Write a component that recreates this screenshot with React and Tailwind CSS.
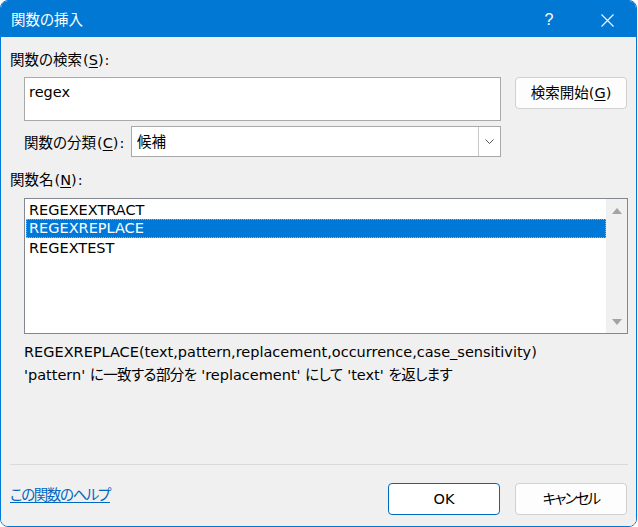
import React from "react";

const F = "font-['DejaVu_Sans','Noto_Sans_CJK_JP',sans-serif] [font-feature-settings:'palt']";

function U({ children }) {
  return <span className="underline underline-offset-2">{children}</span>;
}

export default function App() {
  return (
    <div className={`w-[638px] h-[527px] bg-white ${F} text-[14.5px] text-black`}>
      <div className="w-[637px] h-[527px] flex flex-col rounded-[8px] overflow-hidden border border-[#0078d4]">
        {/* Title bar */}
        <div className="h-[36px] bg-[#0078d4] flex items-center justify-between text-white shrink-0">
          <div className="pl-[10px] leading-[20px] pt-[2px]">関数の挿入</div>
          <div className="flex h-full items-center pr-[6px]">
            <div className="w-[46px] mr-[12px] h-full flex items-center justify-center text-[16px] font-['Liberation_Sans',sans-serif] pt-[2px]">?</div>
            <div className="w-[46px] h-full flex items-center justify-center pt-[2px]">
              <svg width="13" height="13" viewBox="0 0 13 13">
                <path d="M0.5 0.5 L12.5 12.5 M12.5 0.5 L0.5 12.5" stroke="white" strokeWidth="1.1" fill="none" />
              </svg>
            </div>
          </div>
        </div>

        {/* Body */}
        <div className="flex-1 bg-[#f0f0f0] pl-[9px] pr-[8px] pt-[13px] pb-[11px] flex flex-col">
          <div className="leading-[20px]">
            関数の検索<span className="ml-[1px]">(</span><U>S</U><span className="mr-[1px]">)</span>:
          </div>

          <div className="mt-[7px] flex items-start">
            <div className="ml-[14px] w-[477px] h-[44px] bg-white border border-[#a9a9a9] pl-[4px] pt-[4px] leading-[20px]">
              regex
            </div>
            <button className="ml-[14px] w-[112px] h-[32px] bg-[#fdfdfd] border border-[#d0d0d0] rounded-[4px] flex items-center justify-center leading-[20px]">
              検索開始(<U>G</U>)
            </button>
          </div>

          <div className="mt-[5px] flex items-center">
            <div className="ml-[14px] w-[107px] leading-[20px] pt-[2px]">
              関数の分類<span className="ml-[1px]">(</span><U>C</U><span className="mr-[1px]">)</span>:
            </div>
            <div className="w-[370px] h-[31px] bg-white border border-[#a9a9a9] flex">
              <div className="flex-1 pl-[5px] flex items-center leading-[20px]">候補</div>
              <div className="w-[22px] h-full border-l border-[#c8c8c8] flex items-center justify-center">
                <svg width="9" height="5" viewBox="0 0 9 5">
                  <path d="M0.5 0.5 L4.5 4.5 L8.5 0.5" stroke="#555" strokeWidth="1" fill="none" />
                </svg>
              </div>
            </div>
          </div>

          <div className="mt-[13px] leading-[20px]">
            関数名<span className="ml-[1px]">(</span><U>N</U><span className="mr-[1px]">)</span>:
          </div>

          <div className="mt-[8px] ml-[14px] h-[136px] bg-white border border-[#828790] flex">
            <div className="flex-1 pt-[1px] pl-[1px]">
              <div className="h-[19px] pl-[3px] flex items-center leading-[19px] pt-[1px]">REGEXEXTRACT</div>
              <div className="h-[19px] pl-[2px] flex items-center leading-[19px] bg-[#0078d7] text-white border border-dotted border-[#ff9a3c]">
                REGEXREPLACE
              </div>
              <div className="h-[19px] pl-[3px] flex items-center leading-[19px] pt-[1px]">REGEXTEST</div>
            </div>
            <div className="w-[21px] bg-[#f0f0f0] flex flex-col items-center justify-between pt-[9px] pb-[8px]">
              <svg width="10" height="6" viewBox="0 0 10 6">
                <path d="M5 0 L10 6 L0 6 Z" fill="#a3a3a3" />
              </svg>
              <svg width="10" height="6" viewBox="0 0 10 6">
                <path d="M0 0 L10 0 L5 6 Z" fill="#a3a3a3" />
              </svg>
            </div>
          </div>

          <div className="mt-[7px] ml-[14px] leading-[23px]">
            <div>REGEXREPLACE(text,pattern,replacement,occurrence,case_sensitivity)</div>
            <div>
              'pattern' <span className="tracking-[-0.6px]">に一致する部分を</span> 'replacement'{" "}
              <span className="tracking-[-0.6px]">にして</span> 'text'{" "}
              <span className="tracking-[-0.6px]">を返します</span>
            </div>
          </div>

          <div className="flex-1" />

          <div className="h-px bg-[#dadada]" />

          <div className="mt-[18px] flex items-start justify-between">
            <a className="mt-[2px] leading-[20px] text-[#0067c0] underline underline-offset-2 cursor-pointer tracking-[-1.4px]">
              この関数のヘルプ
            </a>
            <div className="flex gap-[15px] mr-[1px]">
              <button className="w-[112px] h-[32px] bg-white border border-[#0067c0] rounded-[4px] flex items-center justify-center leading-[20px]">
                OK
              </button>
              <button className="w-[112px] h-[32px] bg-[#fdfdfd] border border-[#d0d0d0] rounded-[4px] flex items-center justify-center leading-[20px] tracking-[-1.8px]">
                キャンセル
              </button>
            </div>
          </div>
        </div>
      </div>
    </div>
  );
}
